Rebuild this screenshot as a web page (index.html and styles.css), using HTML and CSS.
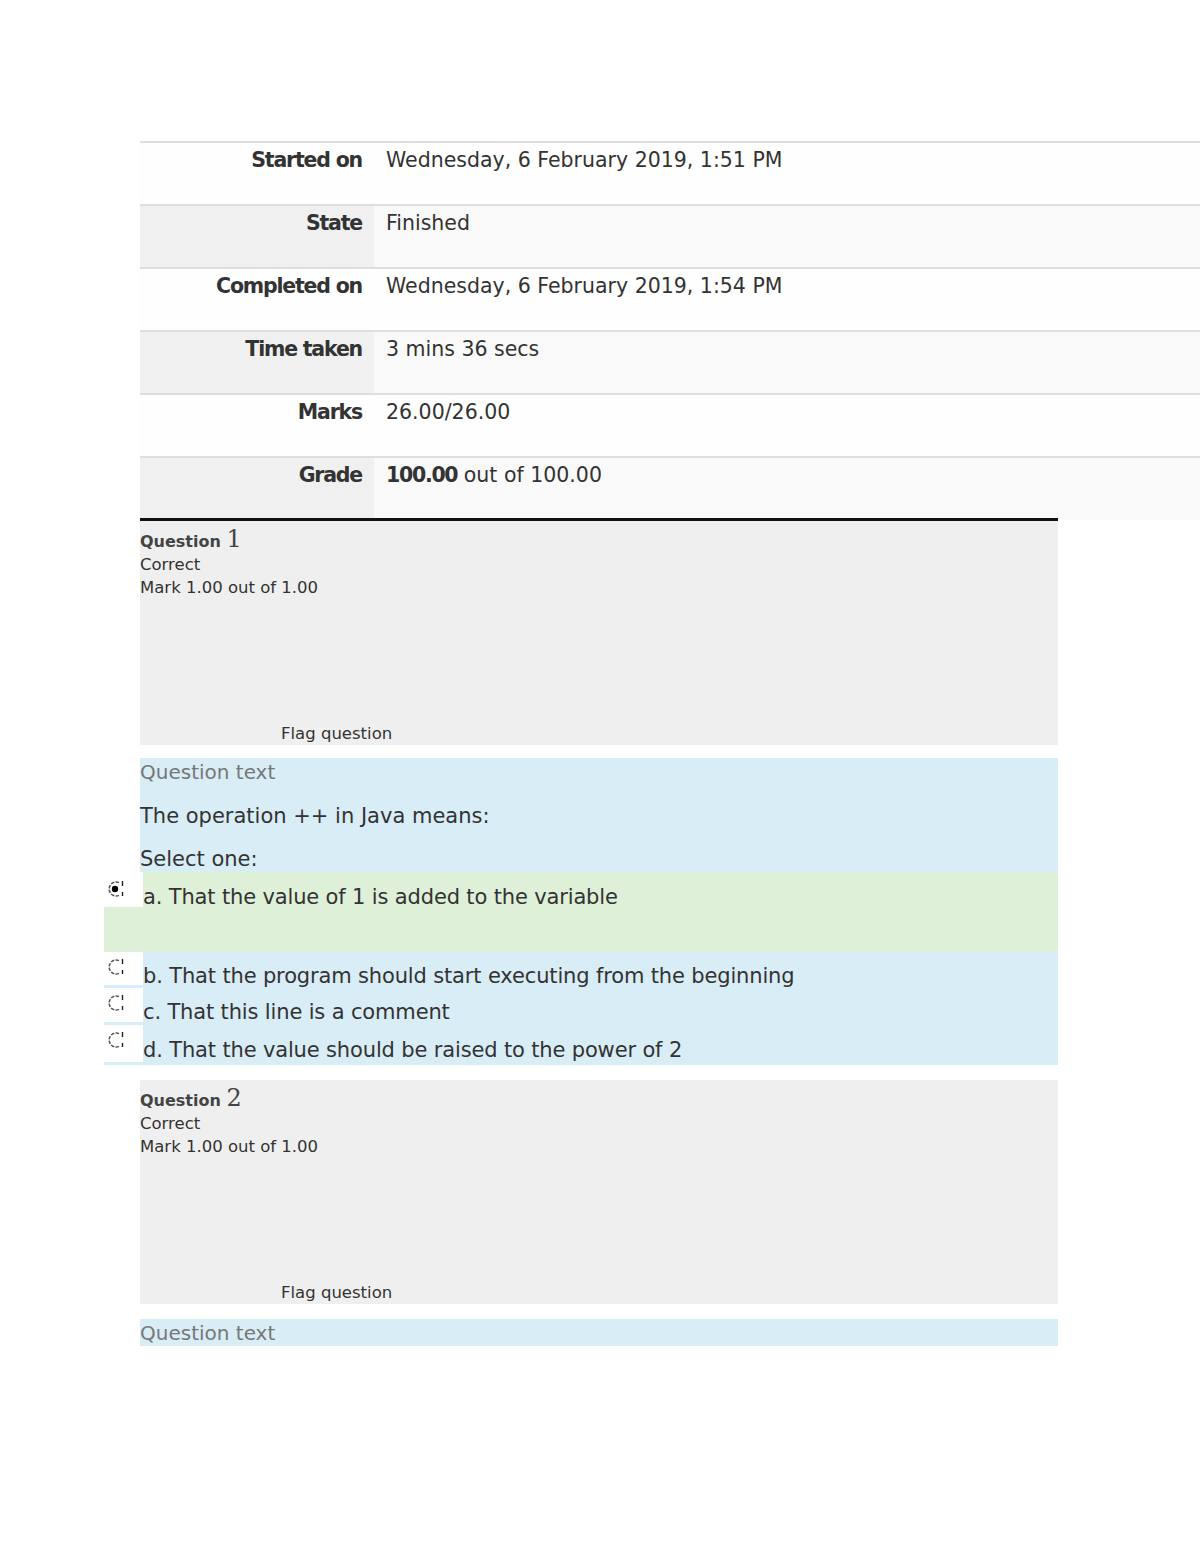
FILE: index.html
```html
<!DOCTYPE html>
<html>
<head>
<meta charset="utf-8">
<link rel="stylesheet" href="styles.css">
</head>
<body>
<div class="page">
  <table class="summary">
    <tr class="odd"><th>Started on</th><td>Wednesday, 6 February 2019, 1:51 PM</td></tr>
    <tr class="even"><th>State</th><td>Finished</td></tr>
    <tr class="odd"><th>Completed on</th><td>Wednesday, 6 February 2019, 1:54 PM</td></tr>
    <tr class="even"><th>Time taken</th><td>3 mins 36 secs</td></tr>
    <tr class="odd"><th>Marks</th><td>26.00/26.00</td></tr>
    <tr class="even"><th>Grade</th><td><b>100.00</b> out of 100.00</td></tr>
  </table>

  <div class="info first">
    <div class="qno">Question <span class="num">1</span></div>
    <div class="state">Correct</div>
    <div class="grade">Mark 1.00 out of 1.00</div>
    <div class="flag">Flag question</div>
  </div>

  <div class="formulation">
    <div class="qlabel">Question text</div>
    <div class="qtext">The operation ++ in Java means:</div>
    <div class="prompt">Select one:</div>
  </div>
  <div class="answers">
    <div class="opt correct">
      <div class="optrow">
        <div class="radio"><svg width="20" height="20" viewBox="0 0 20 20"><path d="M13 3.6 A7 7 0 1 0 13 16.4" fill="none" stroke="#555" stroke-width="1.5" stroke-dasharray="3.5 1.3"/><line x1="16.5" y1="2" x2="16.5" y2="7" stroke="#222" stroke-width="1.4"/><line x1="16.5" y1="13" x2="16.5" y2="17" stroke="#222" stroke-width="1.4"/><circle cx="9" cy="10" r="3.2" fill="#000"/></svg></div>
        <div class="otext">a. That the value of 1 is added to the variable</div>
      </div>
    </div>
    <div class="opt b">
      <div class="radio"><svg width="20" height="20" viewBox="0 0 20 20"><path d="M13 3.6 A7 7 0 1 0 13 16.4" fill="none" stroke="#555" stroke-width="1.5" stroke-dasharray="3.5 1.3"/><line x1="16.5" y1="2" x2="16.5" y2="7" stroke="#222" stroke-width="1.4"/><line x1="16.5" y1="13" x2="16.5" y2="17" stroke="#222" stroke-width="1.4"/></svg></div>
      <div class="otext">b. That the program should start executing from the beginning</div>
    </div>
    <div class="opt c">
      <div class="radio"><svg width="20" height="20" viewBox="0 0 20 20"><path d="M13 3.6 A7 7 0 1 0 13 16.4" fill="none" stroke="#555" stroke-width="1.5" stroke-dasharray="3.5 1.3"/><line x1="16.5" y1="2" x2="16.5" y2="7" stroke="#222" stroke-width="1.4"/><line x1="16.5" y1="13" x2="16.5" y2="17" stroke="#222" stroke-width="1.4"/></svg></div>
      <div class="otext">c. That this line is a comment</div>
    </div>
    <div class="opt d">
      <div class="radio"><svg width="20" height="20" viewBox="0 0 20 20"><path d="M13 3.6 A7 7 0 1 0 13 16.4" fill="none" stroke="#555" stroke-width="1.5" stroke-dasharray="3.5 1.3"/><line x1="16.5" y1="2" x2="16.5" y2="7" stroke="#222" stroke-width="1.4"/><line x1="16.5" y1="13" x2="16.5" y2="17" stroke="#222" stroke-width="1.4"/></svg></div>
      <div class="otext">d. That the value should be raised to the power of 2</div>
    </div>
  </div>

  <div class="info second">
    <div class="qno">Question <span class="num">2</span></div>
    <div class="state">Correct</div>
    <div class="grade">Mark 1.00 out of 1.00</div>
    <div class="flag">Flag question</div>
  </div>

  <div class="formulation short">
    <div class="qlabel">Question text</div>
  </div>
</div>
</body>
</html>
```

FILE: styles.css
```css
html, body {
  margin: 0;
  padding: 0;
  background: #ffffff;
}
body {
  font-family: "DejaVu Sans", Verdana, sans-serif;
  color: #333333;
  width: 1200px;
  height: 1553px;
  overflow: hidden;
}
.page {
  padding-top: 141px;
  padding-left: 140px;
}
.summary {
  border-collapse: collapse;
  width: 1060px;
  font-size: 20.5px;
  letter-spacing: 0;
}
.summary tr {
  border-top: 2px solid #dedede;
  height: 63px;
}
.summary th {
  width: 222px;
  text-align: right;
  vertical-align: top;
  padding: 5px 12px 0 0;
  font-weight: bold;
  letter-spacing: -1.2px;
  color: #333;
}
.summary td {
  vertical-align: top;
  padding: 5px 0 0 12px;
  color: #333;
}
.summary b {
  letter-spacing: -1.3px;
}
.summary tr.even th {
  background: #f0f0f0;
}
.summary tr.even td {
  background: #f9f9f9;
}
.summary tr.odd th,
.summary tr.odd td {
  background: #fefefe;
}
.info {
  width: 918px;
  height: 224px;
  background: #efefef;
  position: relative;
  font-size: 16.5px;
  letter-spacing: 0;
  color: #333;
  box-sizing: border-box;
}
.info.first {
  border-top: 3px solid #111;
  height: 227px;
  margin-top: -2px;
}
.info.second {
  margin-top: 15px;
}
.qno {
  padding-top: 6px;
  font-weight: bold;
  font-size: 16px;
  color: #444;
  height: 25px;
  line-height: 25px;
}
.qno .num {
  font-family: "DejaVu Serif", serif;
  font-weight: normal;
  font-size: 24px;
}
.state, .grade {
  line-height: 23px;
}
.state {
  padding-top: 1px;
}
.flag {
  position: absolute;
  left: 141px;
  bottom: 0;
  line-height: 22px;
}
.formulation {
  margin-top: 13px;
  width: 918px;
  background: #d9edf7;
  height: 114px;
}
.formulation.short {
  margin-top: 15px;
  height: 27px;
}
.qlabel {
  font-size: 20px;
  color: #777;
  line-height: 28px;
}
.qtext, .prompt {
  font-size: 21px;
  line-height: 28px;
  color: #333;
}
.qtext {
  padding-top: 16px;
}
.prompt {
  padding-top: 15px;
}
.answers {
  margin-left: -36px;
  width: 954px;
}
.opt {
  display: flex;
  font-size: 21px;
  letter-spacing: -0.15px;
  color: #333;
}
.opt.correct {
  display: block;
  background: #dff0d8;
  height: 80px;
}
.optrow {
  display: flex;
}
.radio {
  width: 39px;
  flex: none;
  background: #ffffff;
  padding-left: 2px;
  box-sizing: border-box;
}
.correct .radio {
  height: 35px;
  padding-top: 7px;
}
.otext {
  flex: 1;
  line-height: 26px;
}
.correct .otext {
  padding-top: 12px;
}
.opt.b, .opt.c, .opt.d {
  background: #d9edf7;
}
.opt.b .radio, .opt.c .radio, .opt.d .radio {
  border-bottom: 3px solid #d9edf7;
  padding-top: 5px;
}
.opt.b { height: 36px; }
.opt.b .otext { padding-top: 11px; }
.opt.c { height: 37px; }
.opt.c .otext { padding-top: 11px; }
.opt.d { height: 40px; }
.opt.d .otext { padding-top: 12px; }
```
